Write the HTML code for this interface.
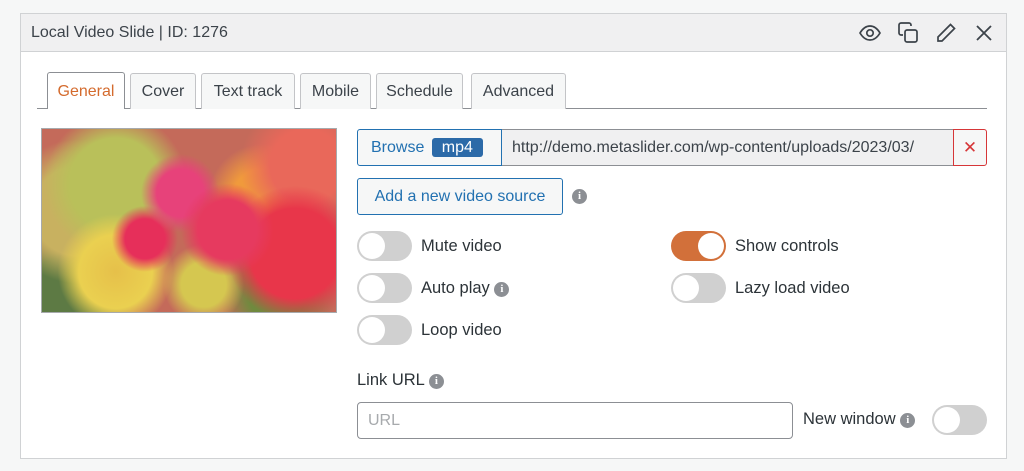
<!DOCTYPE html>
<html><head><meta charset="utf-8"><style>
*{box-sizing:border-box;margin:0;padding:0}
body{width:1024px;height:471px;background:#f6f7f7;font-family:"Liberation Sans",Arial,sans-serif;color:#2c3338;position:relative;overflow:hidden}
.panel{position:absolute;left:20px;top:13px;width:987px;height:446px;background:#fff;border:1px solid #d0d2d4}
.head{height:38px;background:#f0f0f1;border-bottom:1px solid #d0d2d4;font-size:16px;line-height:38px;padding-left:10px;color:#3c434a}
.icons{position:absolute;right:10px;top:7px;height:24px;display:flex;gap:14px}
.tabs{position:absolute;left:16px;top:58px;width:950px;height:37px;border-bottom:1px solid #8c8f94}
.tab{position:absolute;top:1px;height:36px;border:1px solid #c3c4c7;border-bottom:none;background:#f6f7f7;font-size:16px;line-height:36px;text-align:center;border-radius:3px 3px 0 0;color:#3c434a}
.tab.on{background:#fff;color:#d46b2e;height:37px;border-color:#8c8f94;top:0;line-height:38px}
.img{position:absolute;left:20px;top:114px;width:296px;height:185px;border:1px solid #a7aaad;background:
radial-gradient(circle at 63% 55%,#e63a5f 0,#e63a5f 14%,transparent 22%),
radial-gradient(circle at 86% 68%,#e8364a 0,#e8364a 16%,transparent 24%),
radial-gradient(circle at 47% 35%,#e7427a 0,#e7427a 12%,transparent 20%),
radial-gradient(circle at 35% 60%,#e62f5a 0,#e62f5a 9%,transparent 15%),
radial-gradient(circle at 25% 78%,#e6c04a 0,#ead050 14%,transparent 22%),
radial-gradient(circle at 25% 30%,#b9c05a 0,#b9c05a 18%,transparent 28%),
radial-gradient(circle at 12% 45%,#c8b160 0,#c8b160 16%,transparent 26%),
radial-gradient(circle at 90% 20%,#e9685a 0,#e9685a 12%,transparent 22%),
radial-gradient(circle at 75% 38%,#f09a3c 0,#f09a3c 12%,transparent 22%),
radial-gradient(circle at 55% 85%,#d5c750 0,#d5c750 10%,transparent 18%),
radial-gradient(circle at 8% 90%,#5d7a44 0,#5d7a44 12%,transparent 22%),
radial-gradient(circle at 80% 90%,#6f8a3e 0,#6f8a3e 10%,transparent 20%),
#c46a5a}
.btn{position:absolute;border:1px solid #2271b1;background:#f6f7f7;color:#2271b1;font-size:16px;border-radius:3px}
.tog{position:absolute;width:55px;height:30px;border-radius:15px;background:#d0d0d0}
.tog:after{content:"";position:absolute;left:2px;top:2px;width:26px;height:26px;border-radius:50%;background:#fff}
.tog.on{background:#d2703a}.tog.on:after{left:27px}
.lbl{position:absolute;font-size:16.5px;color:#2c3338}
.i{display:inline-block;width:15px;height:15px;border-radius:50%;background:#8c8f94;color:#fff;font-size:11px;line-height:15px;text-align:center;font-weight:bold;font-family:"Liberation Serif",serif;vertical-align:1px}
</style></head><body>
<div class="panel">
<div class="head">Local Video Slide | ID: 1276</div>
<div class="icons">
<svg width="24" height="24" viewBox="0 0 24 24" fill="none" stroke="#3c434a" stroke-width="1.7"><path d="M2 12c3-5 6.5-7 10-7s7 2 10 7c-3 5-6.5 7-10 7s-7-2-10-7z"/><circle cx="12" cy="12" r="3.2"/></svg>
<svg width="24" height="24" viewBox="0 0 24 24" fill="none" stroke="#3c434a" stroke-width="1.7"><path d="M15 5V4a2 2 0 0 0-2-2H5a2 2 0 0 0-2 2v8a2 2 0 0 0 2 2h2"/><rect x="9" y="9" width="12" height="12" rx="2"/></svg>
<svg width="24" height="24" viewBox="0 0 24 24" fill="none" stroke="#3c434a" stroke-width="1.7"><path d="M16.5 3.5l4 4L8 20H4v-4z"/></svg>
<svg width="24" height="24" viewBox="0 0 24 24" fill="none" stroke="#3c434a" stroke-width="1.8"><path d="M5 5l14 14M19 5L5 19"/></svg>
</div>
<div class="tabs">
<div class="tab on" style="left:10px;width:78px">General</div>
<div class="tab" style="left:93px;width:66px">Cover</div>
<div class="tab" style="left:164px;width:94px">Text track</div>
<div class="tab" style="left:263px;width:71px">Mobile</div>
<div class="tab" style="left:339px;width:87px">Schedule</div>
<div class="tab" style="left:434px;width:95px">Advanced</div>
</div>
<div class="img"></div>
<div class="btn" style="left:336px;top:115px;width:145px;height:37px;line-height:35px;padding-left:13px;border-radius:3px 0 0 3px">Browse <span style="background:#2c6aa8;color:#fff;border-radius:3px;padding:1px 10px;margin-left:3px">mp4</span></div>
<div style="position:absolute;left:481px;top:115px;width:452px;height:37px;background:#f0f0f1;border:1px solid #8c8f94;border-left:none;font-size:16px;line-height:35px;padding-left:10px;color:#3c434a;white-space:nowrap;overflow:hidden">http://demo.metaslider.com/wp-content/uploads/2023/03/</div>
<div style="position:absolute;left:932px;top:115px;width:34px;height:37px;border:1px solid #d63638;border-radius:0 3px 3px 0;background:#f6f7f7;color:#d63638;text-align:center;line-height:35px;font-size:17px">✕</div>
<div class="btn" style="left:336px;top:164px;width:206px;height:37px;line-height:35px;text-align:center">Add a new video source</div>
<span class="i" style="position:absolute;left:551px;top:175px">i</span>
<div class="tog" style="left:336px;top:217px"></div><div class="lbl" style="left:400px;top:223px">Mute video</div>
<div class="tog" style="left:336px;top:259px"></div><div class="lbl" style="left:400px;top:265px">Auto play <span class="i">i</span></div>
<div class="tog" style="left:336px;top:301px"></div><div class="lbl" style="left:400px;top:307px">Loop video</div>
<div class="tog on" style="left:650px;top:217px"></div><div class="lbl" style="left:714px;top:223px">Show controls</div>
<div class="tog" style="left:650px;top:259px"></div><div class="lbl" style="left:714px;top:265px">Lazy load video</div>
<div class="lbl" style="left:336px;top:357px">Link URL <span class="i">i</span></div>
<div style="position:absolute;left:336px;top:388px;width:436px;height:37px;border:1px solid #8c8f94;border-radius:4px;font-size:16px;line-height:35px;padding-left:10px;color:#a7aaad">URL</div>
<div class="lbl" style="left:782px;top:396px">New window <span class="i">i</span></div>
<div class="tog" style="left:911px;top:391px"></div>
</div>
</body></html>
